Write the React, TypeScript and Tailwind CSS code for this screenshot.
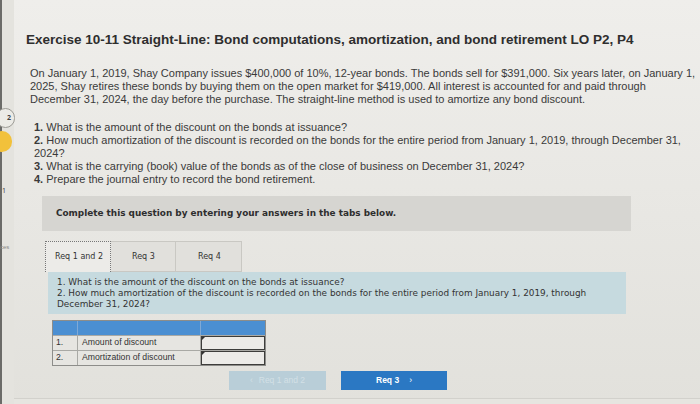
import React from 'react'

const body = { fontFamily: '"Liberation Sans", Arial, sans-serif' }
const verdana = { fontFamily: '"DejaVu Sans", Verdana, sans-serif' }

function Sidebar() {
  return (
    <div className="relative w-[14px] h-full border-l-2 border-[#6b6b68] bg-[#e4e3de]">
      <div className="absolute left-[-6px] top-[108px] w-[19px] h-[20px] rounded-full border border-[#9c9b95] bg-[#ecebe6] flex items-center justify-end pr-[3px] text-[7px] font-bold text-[#444]">
        2
      </div>
      <div className="absolute left-[-10px] top-[131px] w-[20px] h-[21px] rounded-full bg-[#f2c13b]" />
      <div className="absolute left-0 top-[186px] text-[7px] text-[#444]">1</div>
      <div className="absolute left-[-2px] top-[243px] text-[6px] text-[#8a8a86]" style={body}>ces</div>
    </div>
  )
}

function Tabs() {
  return (
    <div className="flex ml-[3px] h-[31px] text-[8px] text-[#333]" style={verdana}>
      <div className="w-[66px] bg-[#ecebe8] border border-dotted border-[#777] border-b-0 flex items-center pl-[9px]">
        Req 1 and 2
      </div>
      <div className="w-[65px] bg-[#e1e0dc] border border-[#c9c8c3] border-l-0 flex items-center pl-[21px]">
        Req 3
      </div>
      <div className="w-[66px] bg-[#e1e0dc] border border-[#c9c8c3] border-l-0 flex items-center pl-[22px]">
        Req 4
      </div>
    </div>
  )
}

function AnswerTable() {
  const rows = [
    ['1.', 'Amount of discount'],
    ['2.', 'Amortization of discount'],
  ]
  return (
    <div className="ml-[10px] mt-[6px] w-[214px] border border-[#8d8d8a] text-[8.7px] text-[#333]" style={body}>
      <div className="flex h-[14px] bg-[#4b8fd2]">
        <div className="w-[25px] border-r border-[#7fa9d6]" />
        <div className="w-[123px] border-r border-[#7fa9d6]" />
        <div className="flex-1" />
      </div>
      {rows.map(([n, label]) => (
        <div key={n} className="flex h-[15px] border-t border-[#a9a9a5] bg-[#e6e5e1]">
          <div className="w-[25px] border-r border-[#a9a9a5] flex items-center pl-[3px]">{n}</div>
          <div className="w-[123px] border-r border-[#a9a9a5] flex items-center pl-[4px]">{label}</div>
          <div className="flex-1 border border-[#3d3d3b] bg-[#ecebe8] relative">
            <div className="absolute left-0 top-0 w-0 h-0 border-l-[3px] border-l-[#333] border-b-[3px] border-b-transparent" />
          </div>
        </div>
      ))}
    </div>
  )
}

export default function App() {
  return (
    <div className="w-[700px] h-[404px] overflow-hidden flex bg-gradient-to-b from-[#efeeeb] to-[#e2e1dc]">
      <Sidebar />
      <div className="flex-1 flex flex-col pl-[12px] text-[#333]" style={body}>
        <h1 className="mt-[30px] text-[13.5px] leading-[20px] font-bold text-[#2e2e2e] whitespace-nowrap">
          Exercise 10-11 Straight-Line: Bond computations, amortization, and bond retirement LO P2, P4
        </h1>
        <p className="mt-[17px] ml-[4px] text-[11px] leading-[13px] text-[#3a3a3a] whitespace-nowrap">
          On January 1, 2019, Shay Company issues $400,000 of 10%, 12-year bonds. The bonds sell for $391,000. Six years later, on January 1,
          <br />
          2025, Shay retires these bonds by buying them on the open market for $419,000. All interest is accounted for and paid through
          <br />
          December 31, 2024, the day before the purchase. The straight-line method is used to amortize any bond discount.
        </p>
        <div className="mt-[15px] ml-[8px] text-[11px] leading-[13px] text-[#3a3a3a] whitespace-nowrap">
          <div><b>1.</b> What is the amount of the discount on the bonds at issuance?</div>
          <div><b>2.</b> How much amortization of the discount is recorded on the bonds for the entire period from January 1, 2019, through December 31,</div>
          <div>2024?</div>
          <div><b>3.</b> What is the carrying (book) value of the bonds as of the close of business on December 31, 2024?</div>
          <div><b>4.</b> Prepare the journal entry to record the bond retirement.</div>
        </div>
        <div className="mt-[10px] ml-[16px] w-[589px] h-[35px] bg-[#d6d5d1] flex items-center pl-[14px]">
          <span className="text-[8.9px] font-bold text-[#2e2e2e]" style={verdana}>
            Complete this question by entering your answers in the tabs below.
          </span>
        </div>
        <div className="mt-[10px] ml-[16px] w-[584px]">
          <Tabs />
          <div className="ml-[6px] w-[578px] bg-[#c6dadf] pt-[5px] pb-[4px] pl-[9px] text-[8.9px] leading-[11px] text-[#333] whitespace-nowrap" style={verdana}>
            <div>1. What is the amount of the discount on the bonds at issuance?</div>
            <div>2. How much amortization of the discount is recorded on the bonds for the entire period from January 1, 2019, through</div>
            <div>December 31, 2024?</div>
          </div>
          <AnswerTable />
          <div className="flex mt-[5px] ml-[187px] gap-[15px] text-[8.5px]" style={body}>
            <div className="w-[97px] h-[19px] bg-[#b9ced8] text-[#d3e0e6] flex items-center justify-center gap-[6px]">
              <span>‹</span>
              <span>Req 1 and 2</span>
            </div>
            <div className="w-[106px] h-[19px] bg-[#2b78c3] text-white font-bold flex items-center justify-center gap-[10px]">
              <span>Req 3</span>
              <span className="font-normal">›</span>
            </div>
          </div>
        </div>
        <div className="flex-1" />
        <div className="h-[6px] -ml-[12px] bg-[#e6e5e0] border-t border-[#d2d1cc]" />
      </div>
    </div>
  )
}
